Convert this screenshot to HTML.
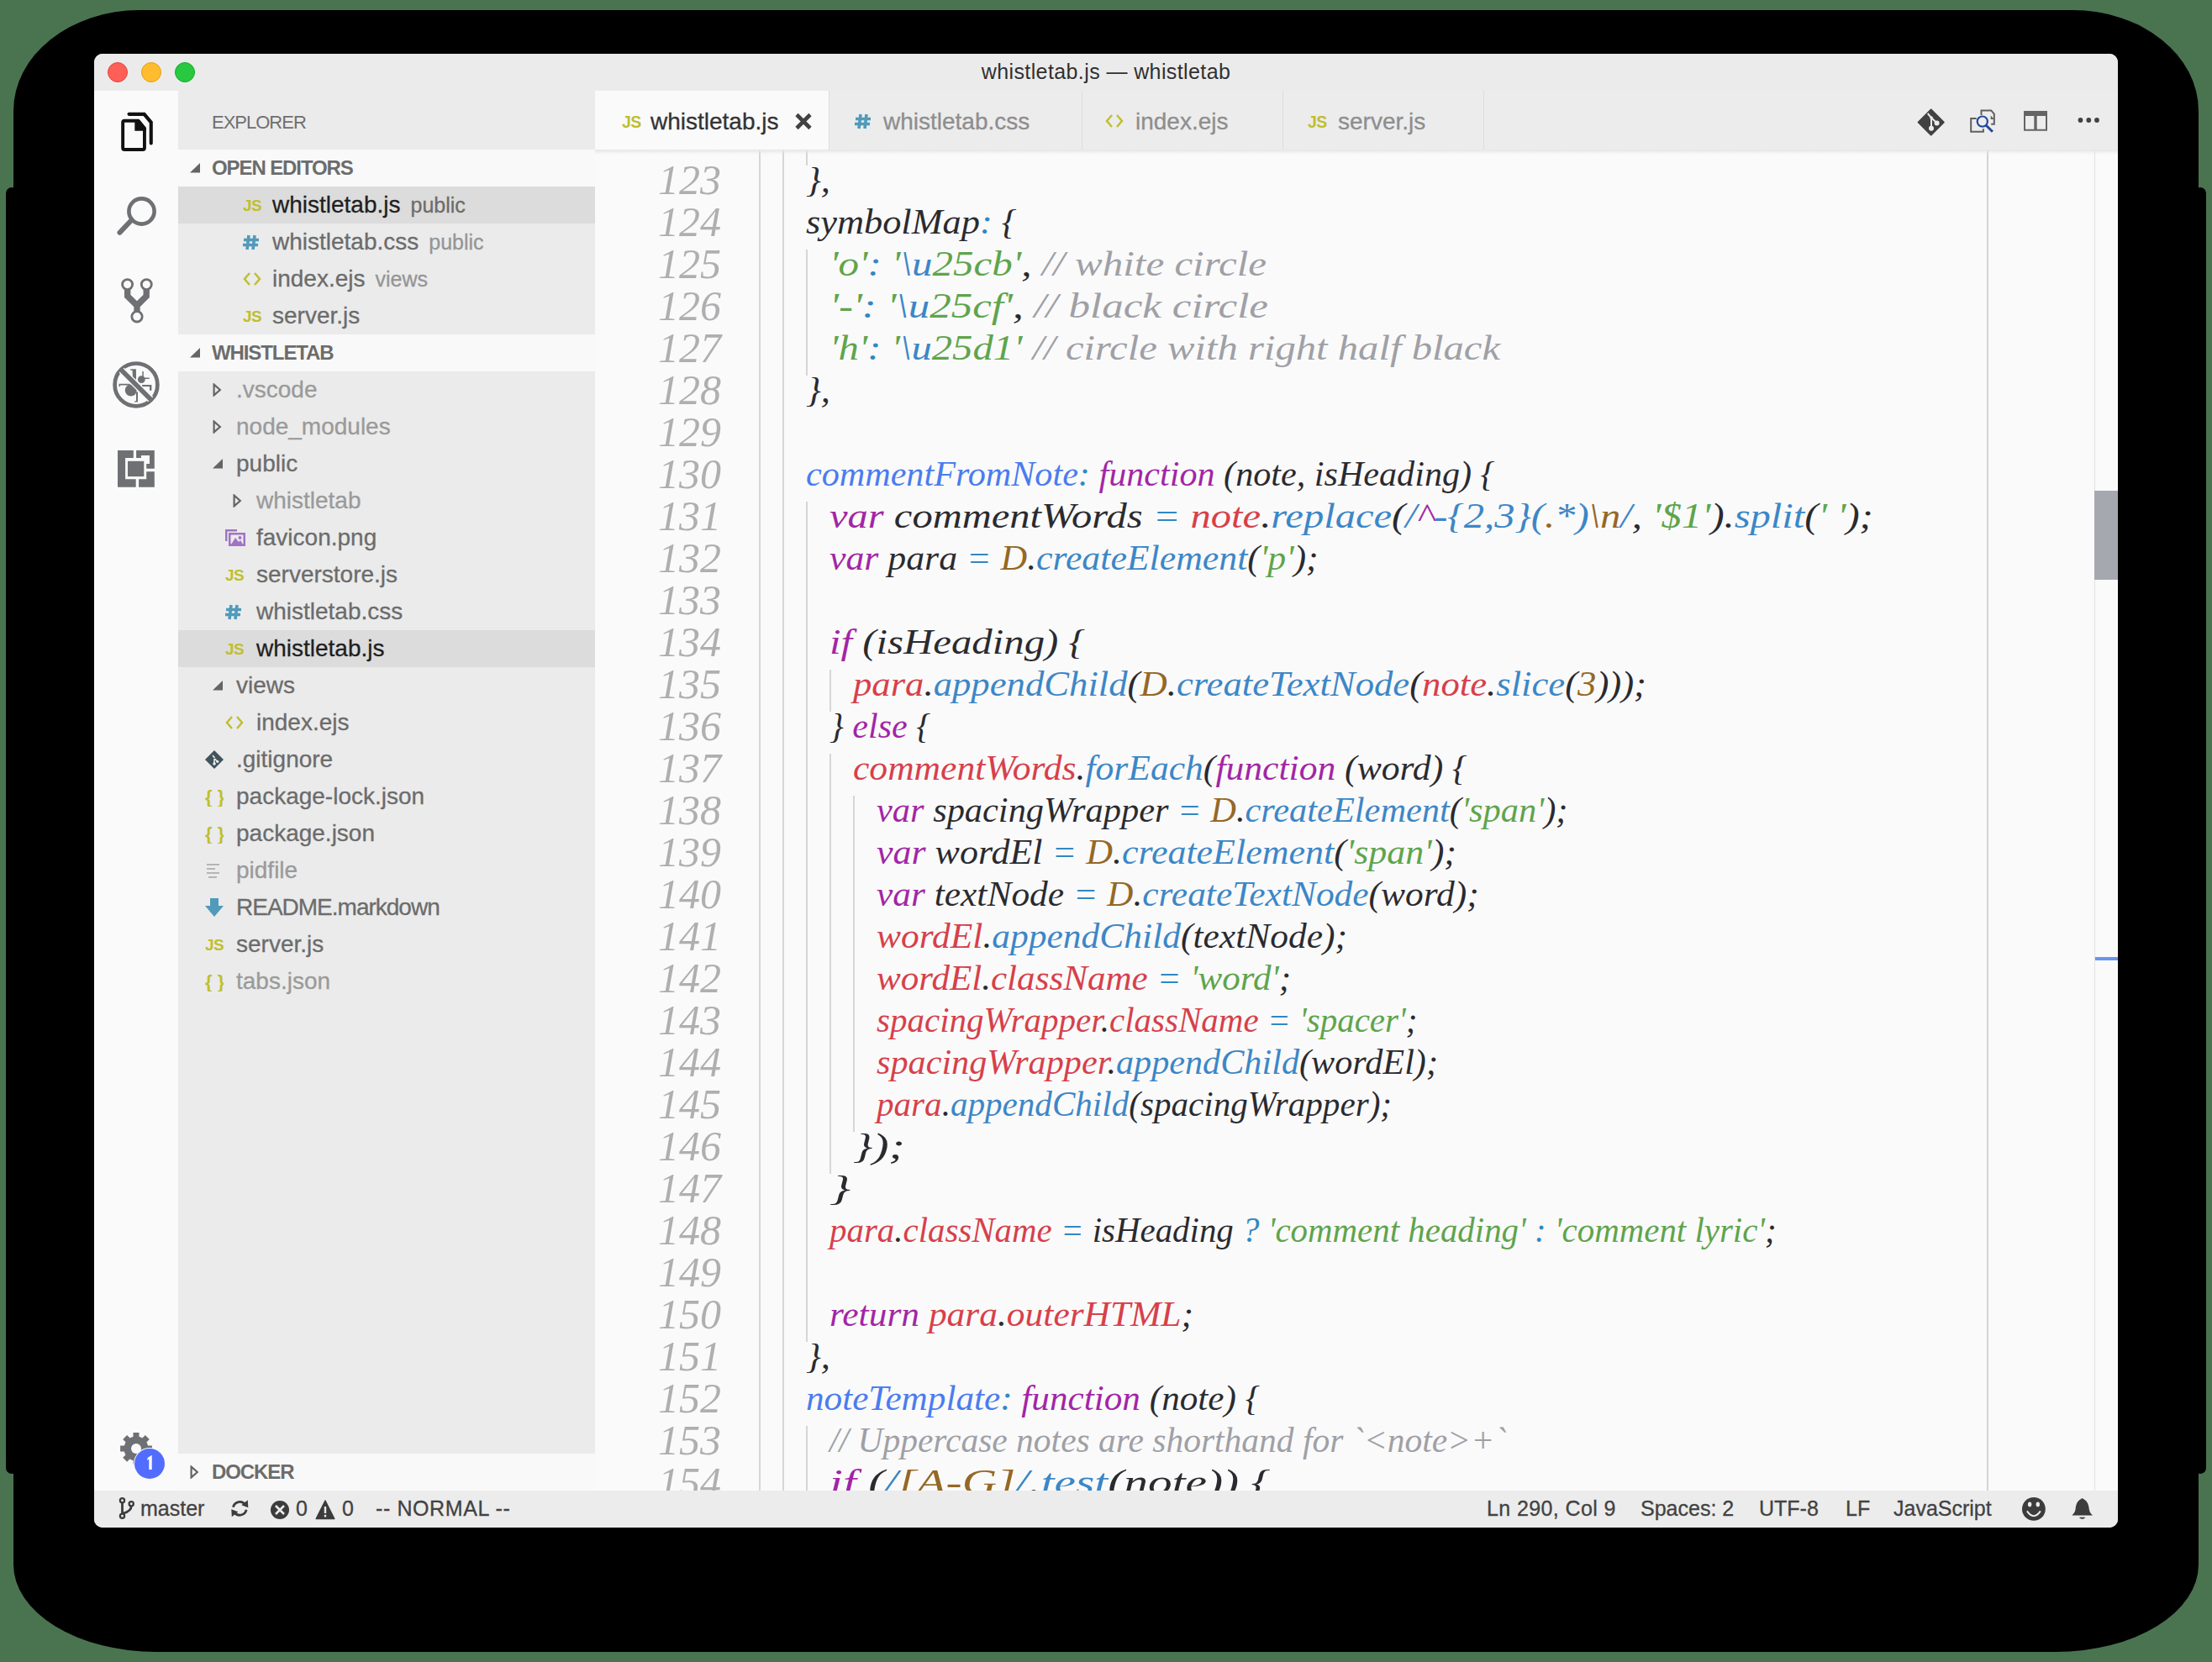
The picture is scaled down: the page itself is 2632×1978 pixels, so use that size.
<!DOCTYPE html>
<html><head><meta charset="utf-8">
<style>
*{margin:0;padding:0;box-sizing:border-box}
html,body{width:2632px;height:1978px;overflow:hidden;background:#4a7450;font-family:"Liberation Sans",sans-serif}
.abs{position:absolute}
#shadow{position:absolute;left:16px;top:12px;width:2600px;height:1954px;background:#000;border-radius:150px 150px 170px 170px / 120px 120px 104px 104px}
#win{position:absolute;left:112px;top:64px;width:2408px;height:1754px;border-radius:10px;overflow:hidden;background:#fafafa}
#title{position:absolute;left:0;top:0;width:2408px;height:44px;background:#ebebeb}
#title .t{position:absolute;left:0;width:2408px;top:-1px;height:44px;line-height:44px;text-align:center;font-size:25px;letter-spacing:0.4px;color:#303030}
.light{position:absolute;top:10px;width:24px;height:24px;border-radius:50%}
#act{position:absolute;left:0;top:44px;width:100px;height:1666px;background:#fafafa}
#side{position:absolute;left:100px;top:44px;width:496px;height:1666px;background:#ebebeb}
#tabs{position:absolute;left:596px;top:44px;width:1812px;height:70px;background:#ececec}
#editor{position:absolute;left:596px;top:114px;width:1812px;height:1596px;background:#fafafa;overflow:hidden}
#status{-webkit-text-stroke:0.3px currentColor;position:absolute;left:0;top:1710px;width:2408px;height:44px;background:#ececec;font-size:25px;color:#424242}
.sh{position:absolute;left:0;width:496px;height:44px;background:#f9f9f9}
.row{-webkit-text-stroke:0.3px currentColor;position:absolute;left:0;width:496px;height:44px;font-size:28px;line-height:44px;color:#6c6c6c;white-space:nowrap}
.row.sel{background:#dcdcdc}
.row .n{position:absolute;top:0}
.row .d{font-size:25px;color:#8e8e8e;margin-left:12px}
.hd{position:absolute;font-size:24px;letter-spacing:-1.1px;font-weight:bold;color:#6c6c6c;line-height:44px;top:0}
.tri{position:absolute;width:0;height:0}
.ic{position:absolute}
.js{font-weight:bold;color:#cbcb41;font-size:19px;letter-spacing:-1px}
.css{font-weight:bold;color:#519aba;font-size:26px}
.ejs{color:#cbcb41;font-size:22px;font-weight:bold}
.json{color:#cbcb41;font-size:24px;font-weight:bold}
.g{position:absolute;width:2px;height:50px;background:#d6d6d6}
.ln{position:absolute;left:0;width:150px;text-align:right;height:50px;line-height:50px;font-family:"Liberation Serif",serif;font-style:italic;font-size:50px;color:#a3a3a5;white-space:nowrap;opacity:0.85}
.cl{position:absolute;height:50px;line-height:50px;font-family:"Liberation Serif",serif;font-style:italic;font-size:42px;white-space:pre;transform-origin:0 0;opacity:0.85}
</style></head><body>
<div id="shadow"></div>
<div class="abs" style="left:7px;top:223px;width:14px;height:1531px;background:#000;border-radius:9px/9px"></div>
<div class="abs" style="left:2611px;top:223px;width:14px;height:1531px;background:#000;border-radius:9px/9px"></div>
<div id="win">
  <div id="title">
    <div class="t">whistletab.js — whistletab</div>
    <div class="light" style="left:16px;background:#fe5f57;border:1px solid #e2463f"></div>
    <div class="light" style="left:56px;background:#febc2e;border:1px solid #e1a116"></div>
    <div class="light" style="left:96px;background:#28c840;border:1px solid #12ac28"></div>
  </div>
  <div id="act"><svg class="abs" style="left:0;top:0" width="100" height="1666" viewBox="0 0 100 1666"><g fill="none" stroke="#111" stroke-width="3.9" stroke-linejoin="round"><path d="M36.15,35.75 H52.5 L59.95,45 V67.95 Q59.95,69.95 57.95,69.95 H36.15 Q34.15,69.95 34.15,67.95 V37.75 Q34.15,35.75 36.15,35.75 Z"/></g><path d="M48.3,34 H53.5 L61.9,44 V47.8 H48.3 Z" fill="#111"/><path d="M41.5,27.85 H59.6 L67.75,37.6 V62.5" fill="none" stroke="#111" stroke-width="4.1" stroke-linecap="round" stroke-linejoin="miter"/><circle cx="56.5" cy="143.5" r="15.1" fill="none" stroke="#6f7073" stroke-width="4.6"/><path d="M43.5,155 L30.5,168.8" stroke="#6f7073" stroke-width="6" stroke-linecap="round"/><g transform="translate(24,216)" fill="none" stroke="#6f7073"><circle cx="15.6" cy="14.6" r="6.0" stroke-width="2.8"/><circle cx="38.3" cy="14.6" r="6.0" stroke-width="2.8"/><circle cx="27" cy="52.8" r="6.2" stroke-width="2.8"/><path d="M15.7,20 V28.5 L27,39.5 V47 M38.2,20 V28.5 L27,39.5" stroke-width="7.4" stroke-linejoin="miter"/></g><g transform="translate(16,316)" fill="#6f7073"><circle cx="34" cy="33.9" r="25.4" fill="none" stroke="#6f7073" stroke-width="4.7"/><defs><clipPath id="cpL"><path d="M0,0 H0 L0,70 H70 Z M0,4 L15,19 L52,56 L66,70 H0 Z"/></clipPath></defs><g clip-path="url(#cpLL)"></g><circle cx="27.8" cy="40.5" r="7"/><circle cx="40.3" cy="27.6" r="4.4"/><path d="M13.5,32.7 H26.5 V34.5 H14.9 V36 H13.5 Z"/><path d="M34,42.5 H36 V54.6 H32 V53.2 H34 Z"/><path d="M27.2,15.3 H33.9 L34,28 L30,26 L29.5,16.8 H27.2 Z"/><path d="M41.3,18 H42.8 V25.6 H49.7 V27 H41.3 Z"/><path d="M41,34 H52.4 V40.7 H50 V36 H41 Z"/></g><g transform="translate(16,316)"><path d="M16.6,16.6 L51.3,51.3" stroke="#fafafa" stroke-width="8.4"/><path d="M16.2,16.2 L51.7,51.7" stroke="#6f7073" stroke-width="5.6"/></g><g transform="translate(28,428)" fill="#6f7073"><path d="M0,0 H18.8 V8.9 H9.1 V34.2 H21.7 V43.8 H0 Z"/><path d="M22.1,0 H43.8 V21.7 H34.2 V15.9 H38 V6 H27.9 V8.9 H22.1 Z"/><path d="M34.2,25.3 H43.8 V43.8 H25.1 V34.2 H34.2 Z"/><path d="M12,12.8 H31.3 V31.1 H12 Z"/></g><path d="M46.48,1602.76 L46.50,1597.02 L53.50,1597.02 L53.52,1602.76 L56.80,1604.12 L60.87,1600.08 L65.82,1605.03 L61.78,1609.10 L63.14,1612.38 L68.88,1612.40 L68.88,1619.40 L63.14,1619.42 L61.78,1622.70 L65.82,1626.77 L60.87,1631.72 L56.80,1627.68 L53.52,1629.04 L53.50,1634.78 L46.50,1634.78 L46.48,1629.04 L43.20,1627.68 L39.13,1631.72 L34.18,1626.77 L38.22,1622.70 L36.86,1619.42 L31.12,1619.40 L31.12,1612.40 L36.86,1612.38 L38.22,1609.10 L34.18,1605.03 L39.13,1600.08 L43.20,1604.12 Z" fill="#6f7073"/><circle cx="50" cy="1615.9" r="14.5" fill="#6f7073"/><circle cx="50" cy="1615.9" r="6" fill="#fafafa"/><circle cx="66" cy="1633.9" r="19" fill="#fafafa"/><circle cx="66" cy="1633.9" r="18" fill="#526cff"/><path d="M63.6,1627 L68.7,1623.8 V1641 H65.3 V1628.6 L63.2,1630 Z" fill="#fff"/></svg></div>
  <div id="side"><div class="abs" style="left:40px;top:26px;font-size:22px;letter-spacing:-1px;color:#6f6f6f;line-height:24px">EXPLORER</div>
<div class="sh" style="top:70px"></div>
<svg class="ic" style="left:14px;top:86px" width="13" height="12" viewBox="0 0 13 12"><path d="M12 0 V11.5 H0 Z" fill="#646465"/></svg>
<div class="hd" style="left:40px;top:70px">OPEN EDITORS</div>
<div class="row sel" style="top:114px"></div>
<svg class="ic" style="left:77px;top:128px" width="22" height="17" viewBox="0 0 22 17"><text x="0" y="15" font-family="Liberation Sans" font-weight="bold" font-size="19" fill="#bfbf30" letter-spacing="-0.5">JS</text></svg>
<div class="row" style="top:114px;left:112px;width:auto;color:#1f1f1f">whistletab.js<span class="d" style="color:#6c6c6c">public</span></div>
<div class="row" style="top:158px"></div>
<svg class="ic" style="left:77px;top:171px" width="20" height="19" viewBox="0 0 20 19"><g stroke="#519aba" stroke-width="3.6" fill="none"><path d="M7 1 L5 18 M14 1 L12 18 M1 6.5 H19 M0 12.5 H18"/></g></svg>
<div class="row" style="top:158px;left:112px;width:auto;color:#6c6c6c">whistletab.css<span class="d" style="color:#959595">public</span></div>
<div class="row" style="top:202px"></div>
<svg class="ic" style="left:77px;top:215px" width="22" height="18" viewBox="0 0 22 18"><g stroke="#bfbf30" stroke-width="2.5" fill="none"><path d="M8 2 L2 9 L8 16 M14 2 L20 9 L14 16"/></g></svg>
<div class="row" style="top:202px;left:112px;width:auto;color:#6c6c6c">index.ejs<span class="d" style="color:#959595">views</span></div>
<div class="row" style="top:246px"></div>
<svg class="ic" style="left:77px;top:260px" width="22" height="17" viewBox="0 0 22 17"><text x="0" y="15" font-family="Liberation Sans" font-weight="bold" font-size="19" fill="#bfbf30" letter-spacing="-0.5">JS</text></svg>
<div class="row" style="top:246px;left:112px;width:auto;color:#6c6c6c">server.js</div>
<div class="sh" style="top:290px"></div>
<svg class="ic" style="left:14px;top:306px" width="13" height="12" viewBox="0 0 13 12"><path d="M12 0 V11.5 H0 Z" fill="#646465"/></svg>
<div class="hd" style="left:40px;top:290px">WHISTLETAB</div>
<svg class="ic" style="left:41px;top:348px" width="12" height="16" viewBox="0 0 12 16"><path d="M1.6 1.6 L8.8 8 L1.6 14.4 Z" fill="none" stroke="#646465" stroke-width="2.2"/></svg>
<div class="row" style="top:334px;left:69px;width:auto;color:#9a9a9a">.vscode</div>
<svg class="ic" style="left:41px;top:392px" width="12" height="16" viewBox="0 0 12 16"><path d="M1.6 1.6 L8.8 8 L1.6 14.4 Z" fill="none" stroke="#646465" stroke-width="2.2"/></svg>
<div class="row" style="top:378px;left:69px;width:auto;color:#9a9a9a">node_modules</div>
<svg class="ic" style="left:41px;top:438px" width="13" height="12" viewBox="0 0 13 12"><path d="M12 0 V11.5 H0 Z" fill="#646465"/></svg>
<div class="row" style="top:422px;left:69px;width:auto;color:#6c6c6c">public</div>
<svg class="ic" style="left:65px;top:480px" width="12" height="16" viewBox="0 0 12 16"><path d="M1.6 1.6 L8.8 8 L1.6 14.4 Z" fill="none" stroke="#646465" stroke-width="2.2"/></svg>
<div class="row" style="top:466px;left:93px;width:auto;color:#9a9a9a">whistletab</div>
<svg class="ic" style="left:56px;top:522px" width="24" height="20" viewBox="0 0 24 20"><g fill="#a074c4"><path d="M0 0 H14 V2.5 H2.5 V14 H0 Z"/><path d="M4 4 H24 V20 H4 Z M6.5 6.5 V17.5 H21.5 V6.5 Z"/><path d="M7 18 L12 10 L16 15 L18 13 L21 18 Z"/><circle cx="17.5" cy="10" r="2"/></g></svg>
<div class="row" style="top:510px;left:93px;width:auto;color:#6c6c6c">favicon.png</div>
<svg class="ic" style="left:56px;top:568px" width="22" height="17" viewBox="0 0 22 17"><text x="0" y="15" font-family="Liberation Sans" font-weight="bold" font-size="19" fill="#bfbf30" letter-spacing="-0.5">JS</text></svg>
<div class="row" style="top:554px;left:93px;width:auto;color:#6c6c6c">serverstore.js</div>
<svg class="ic" style="left:56px;top:611px" width="20" height="19" viewBox="0 0 20 19"><g stroke="#519aba" stroke-width="3.6" fill="none"><path d="M7 1 L5 18 M14 1 L12 18 M1 6.5 H19 M0 12.5 H18"/></g></svg>
<div class="row" style="top:598px;left:93px;width:auto;color:#6c6c6c">whistletab.css</div>
<div class="row sel" style="top:642px"></div>
<svg class="ic" style="left:56px;top:656px" width="22" height="17" viewBox="0 0 22 17"><text x="0" y="15" font-family="Liberation Sans" font-weight="bold" font-size="19" fill="#bfbf30" letter-spacing="-0.5">JS</text></svg>
<div class="row" style="top:642px;left:93px;width:auto;color:#1f1f1f">whistletab.js</div>
<svg class="ic" style="left:41px;top:702px" width="13" height="12" viewBox="0 0 13 12"><path d="M12 0 V11.5 H0 Z" fill="#646465"/></svg>
<div class="row" style="top:686px;left:69px;width:auto;color:#6c6c6c">views</div>
<svg class="ic" style="left:56px;top:743px" width="22" height="18" viewBox="0 0 22 18"><g stroke="#bfbf30" stroke-width="2.5" fill="none"><path d="M8 2 L2 9 L8 16 M14 2 L20 9 L14 16"/></g></svg>
<div class="row" style="top:730px;left:93px;width:auto;color:#6c6c6c">index.ejs</div>
<svg class="ic" style="left:32px;top:785px" width="22" height="22" viewBox="0 0 22 22"><path d="M11 0 L22 11 L11 22 L0 11 Z" fill="#41535b"/><path d="M9 6 L11.5 9 M11 10 V16 M11.5 10 L14.5 13" stroke="#ececec" stroke-width="1.6" fill="none"/><circle cx="11" cy="16" r="1.8" fill="#ececec"/><circle cx="14.8" cy="13.3" r="1.6" fill="#ececec"/></svg>
<div class="row" style="top:774px;left:69px;width:auto;color:#6c6c6c">.gitignore</div>
<svg class="ic" style="left:32px;top:828px" width="22" height="24" viewBox="0 0 22 24"><text x="0" y="20" font-family="Liberation Sans" font-weight="bold" font-size="22" fill="#bfbf30">{ }</text></svg>
<div class="row" style="top:818px;left:69px;width:auto;color:#6c6c6c">package-lock.json</div>
<svg class="ic" style="left:32px;top:872px" width="22" height="24" viewBox="0 0 22 24"><text x="0" y="20" font-family="Liberation Sans" font-weight="bold" font-size="22" fill="#bfbf30">{ }</text></svg>
<div class="row" style="top:862px;left:69px;width:auto;color:#6c6c6c">package.json</div>
<svg class="ic" style="left:32px;top:918px" width="20" height="20" viewBox="0 0 20 20"><g stroke="#b5b5b5" stroke-width="2" fill="none"><path d="M2 3 H17 M2 8 H12 M2 13 H17 M4 18 H14"/></g></svg>
<div class="row" style="top:906px;left:69px;width:auto;color:#9a9a9a">pidfile</div>
<svg class="ic" style="left:32px;top:961px" width="22" height="22" viewBox="0 0 22 22"><path d="M6 0 H16 V9 H22 L11 22 L0 9 H6 Z" fill="#519aba"/></svg>
<div class="row" style="top:950px;left:69px;width:auto;color:#6c6c6c;letter-spacing:-1px">README.markdown</div>
<svg class="ic" style="left:32px;top:1008px" width="22" height="17" viewBox="0 0 22 17"><text x="0" y="15" font-family="Liberation Sans" font-weight="bold" font-size="19" fill="#bfbf30" letter-spacing="-0.5">JS</text></svg>
<div class="row" style="top:994px;left:69px;width:auto;color:#6c6c6c">server.js</div>
<svg class="ic" style="left:32px;top:1048px" width="22" height="24" viewBox="0 0 22 24"><text x="0" y="20" font-family="Liberation Sans" font-weight="bold" font-size="22" fill="#bfbf30">{ }</text></svg>
<div class="row" style="top:1038px;left:69px;width:auto;color:#9a9a9a">tabs.json</div>
<div class="sh" style="top:1622px"></div>
<svg class="ic" style="left:14px;top:1636px" width="12" height="16" viewBox="0 0 12 16"><path d="M1.6 1.6 L8.8 8 L1.6 14.4 Z" fill="none" stroke="#646465" stroke-width="2.2"/></svg>
<div class="hd" style="left:40px;top:1622px">DOCKER</div></div>
  <div id="tabs"><div class="abs" style="left:0;top:0;width:278px;height:70px;background:#fafafa"></div>
<div class="abs" style="left:278px;top:0;width:1px;height:70px;background:#dddddd"></div>
<div class="abs" style="left:579px;top:0;width:1px;height:70px;background:#dddddd"></div>
<div class="abs" style="left:818px;top:0;width:1px;height:70px;background:#dddddd"></div>
<div class="abs" style="left:1057px;top:0;width:1px;height:70px;background:#dddddd"></div>
<svg class="abs" style="left:32px;top:28px" width="24" height="18" viewBox="0 0 24 18"><text x="0" y="16" font-family="Liberation Sans" font-weight="bold" font-size="19.5" fill="#bfbf30" letter-spacing="-0.5">JS</text></svg>
<div class="abs" style="left:66px;font-size:28px;line-height:70px;top:2px;-webkit-text-stroke:0.3px currentColor;white-space:nowrap;color:#333333">whistletab.js</div>
<svg class="abs" style="left:237px;top:26px" width="22" height="21" viewBox="0 0 22 21"><path d="M3,2.5 L19,18.5 M19,2.5 L3,18.5" stroke="#424242" stroke-width="4.6"/></svg>
<svg class="abs" style="left:309px;top:27px" width="20" height="19" viewBox="0 0 20 19"><g stroke="#519aba" stroke-width="3.6" fill="none"><path d="M7 1 L5 18 M14 1 L12 18 M1 6.5 H19 M0 12.5 H18"/></g></svg>
<div class="abs" style="left:343px;font-size:28px;line-height:70px;top:2px;-webkit-text-stroke:0.3px currentColor;white-space:nowrap;color:#8e8e8e">whistletab.css</div>
<svg class="abs" style="left:607px;top:27px" width="22" height="18" viewBox="0 0 22 18"><g stroke="#bfbf30" stroke-width="2.5" fill="none"><path d="M8 2 L2 9 L8 16 M14 2 L20 9 L14 16"/></g></svg>
<div class="abs" style="left:643px;font-size:28px;line-height:70px;top:2px;-webkit-text-stroke:0.3px currentColor;white-space:nowrap;color:#8e8e8e">index.ejs</div>
<svg class="abs" style="left:848px;top:28px" width="24" height="18" viewBox="0 0 24 18"><text x="0" y="16" font-family="Liberation Sans" font-weight="bold" font-size="19.5" fill="#bfbf30" letter-spacing="-0.5">JS</text></svg>
<div class="abs" style="left:884px;font-size:28px;line-height:70px;top:2px;-webkit-text-stroke:0.3px currentColor;white-space:nowrap;color:#8e8e8e">server.js</div>
<svg class="abs" style="left:0;top:0" width="1812" height="70" viewBox="0 0 1812 70"><path d="M1589.6999999999998,22.5 L1604.6999999999998,37.5 L1589.6999999999998,52.5 L1574.6999999999998,37.5 Z" fill="#424242" stroke="#424242" stroke-width="2" stroke-linejoin="round"/><path d="M1585.6999999999998,27.0 L1589.9999999999998,32.0 V44.5 M1589.9999999999998,32.0 L1596.6,38.5" stroke="#ececec" stroke-width="2" fill="none"/><circle cx="1589.9999999999998" cy="44.7" r="3" fill="#ececec"/><circle cx="1596.6" cy="38.5" r="3" fill="#ececec"/><circle cx="1589.9999999999998" cy="32.0" r="1.8" fill="#ececec"/><g transform="translate(1636.1999999999998,22.400000000000006)" fill="none" stroke="#5f5f5f" stroke-width="2"><path d="M13.3,6.5 V1 H25 L28.6,5.2 V17.3 H25"/><path d="M7.5,10.7 H1 V26.3 H15.7 V22.8"/></g><g transform="translate(1636.1999999999998,22.400000000000006)"><path d="M24.5,7 L28.6,11.5 H24.5 Z" fill="#5f5f5f"/><circle cx="14.6" cy="14.2" r="6.1" fill="none" stroke="#23489c" stroke-width="2.2"/><path d="M18.8,18.6 L26.7,26.4" stroke="#23489c" stroke-width="3"/></g><g transform="translate(1700,23.900000000000006)" fill="#646464"><path d="M0,0 H28 V23.8 H0 Z M2,6.1 V21.8 H12.3 V6.1 Z M15.7,6.1 V21.8 H26 V6.1 Z"/></g><circle cx="1767.5" cy="35" r="2.9" fill="#424242"/><circle cx="1777.3000000000002" cy="35" r="2.9" fill="#424242"/><circle cx="1787" cy="35" r="2.9" fill="#424242"/></svg></div>
  <div id="editor"><div class="g" style="left:195px;top:-31px"></div>
<div class="g" style="left:223px;top:-31px"></div>
<div class="g" style="left:251px;top:-31px"></div>
<div class="g" style="left:195px;top:19px"></div>
<div class="g" style="left:223px;top:19px"></div>
<div class="g" style="left:195px;top:69px"></div>
<div class="g" style="left:223px;top:69px"></div>
<div class="g" style="left:195px;top:119px"></div>
<div class="g" style="left:223px;top:119px"></div>
<div class="g" style="left:251px;top:119px"></div>
<div class="g" style="left:195px;top:169px"></div>
<div class="g" style="left:223px;top:169px"></div>
<div class="g" style="left:251px;top:169px"></div>
<div class="g" style="left:195px;top:219px"></div>
<div class="g" style="left:223px;top:219px"></div>
<div class="g" style="left:251px;top:219px"></div>
<div class="g" style="left:195px;top:269px"></div>
<div class="g" style="left:223px;top:269px"></div>
<div class="g" style="left:195px;top:319px"></div>
<div class="g" style="left:223px;top:319px"></div>
<div class="g" style="left:195px;top:369px"></div>
<div class="g" style="left:223px;top:369px"></div>
<div class="g" style="left:195px;top:419px"></div>
<div class="g" style="left:223px;top:419px"></div>
<div class="g" style="left:251px;top:419px"></div>
<div class="g" style="left:195px;top:469px"></div>
<div class="g" style="left:223px;top:469px"></div>
<div class="g" style="left:251px;top:469px"></div>
<div class="g" style="left:195px;top:519px"></div>
<div class="g" style="left:223px;top:519px"></div>
<div class="g" style="left:251px;top:519px"></div>
<div class="g" style="left:195px;top:569px"></div>
<div class="g" style="left:223px;top:569px"></div>
<div class="g" style="left:251px;top:569px"></div>
<div class="g" style="left:195px;top:619px"></div>
<div class="g" style="left:223px;top:619px"></div>
<div class="g" style="left:251px;top:619px"></div>
<div class="g" style="left:279px;top:619px"></div>
<div class="g" style="left:195px;top:669px"></div>
<div class="g" style="left:223px;top:669px"></div>
<div class="g" style="left:251px;top:669px"></div>
<div class="g" style="left:195px;top:719px"></div>
<div class="g" style="left:223px;top:719px"></div>
<div class="g" style="left:251px;top:719px"></div>
<div class="g" style="left:279px;top:719px"></div>
<div class="g" style="left:195px;top:769px"></div>
<div class="g" style="left:223px;top:769px"></div>
<div class="g" style="left:251px;top:769px"></div>
<div class="g" style="left:279px;top:769px"></div>
<div class="g" style="left:307px;top:769px"></div>
<div class="g" style="left:195px;top:819px"></div>
<div class="g" style="left:223px;top:819px"></div>
<div class="g" style="left:251px;top:819px"></div>
<div class="g" style="left:279px;top:819px"></div>
<div class="g" style="left:307px;top:819px"></div>
<div class="g" style="left:195px;top:869px"></div>
<div class="g" style="left:223px;top:869px"></div>
<div class="g" style="left:251px;top:869px"></div>
<div class="g" style="left:279px;top:869px"></div>
<div class="g" style="left:307px;top:869px"></div>
<div class="g" style="left:195px;top:919px"></div>
<div class="g" style="left:223px;top:919px"></div>
<div class="g" style="left:251px;top:919px"></div>
<div class="g" style="left:279px;top:919px"></div>
<div class="g" style="left:307px;top:919px"></div>
<div class="g" style="left:195px;top:969px"></div>
<div class="g" style="left:223px;top:969px"></div>
<div class="g" style="left:251px;top:969px"></div>
<div class="g" style="left:279px;top:969px"></div>
<div class="g" style="left:307px;top:969px"></div>
<div class="g" style="left:195px;top:1019px"></div>
<div class="g" style="left:223px;top:1019px"></div>
<div class="g" style="left:251px;top:1019px"></div>
<div class="g" style="left:279px;top:1019px"></div>
<div class="g" style="left:307px;top:1019px"></div>
<div class="g" style="left:195px;top:1069px"></div>
<div class="g" style="left:223px;top:1069px"></div>
<div class="g" style="left:251px;top:1069px"></div>
<div class="g" style="left:279px;top:1069px"></div>
<div class="g" style="left:307px;top:1069px"></div>
<div class="g" style="left:195px;top:1119px"></div>
<div class="g" style="left:223px;top:1119px"></div>
<div class="g" style="left:251px;top:1119px"></div>
<div class="g" style="left:279px;top:1119px"></div>
<div class="g" style="left:307px;top:1119px"></div>
<div class="g" style="left:195px;top:1169px"></div>
<div class="g" style="left:223px;top:1169px"></div>
<div class="g" style="left:251px;top:1169px"></div>
<div class="g" style="left:279px;top:1169px"></div>
<div class="g" style="left:195px;top:1219px"></div>
<div class="g" style="left:223px;top:1219px"></div>
<div class="g" style="left:251px;top:1219px"></div>
<div class="g" style="left:195px;top:1269px"></div>
<div class="g" style="left:223px;top:1269px"></div>
<div class="g" style="left:251px;top:1269px"></div>
<div class="g" style="left:195px;top:1319px"></div>
<div class="g" style="left:223px;top:1319px"></div>
<div class="g" style="left:251px;top:1319px"></div>
<div class="g" style="left:195px;top:1369px"></div>
<div class="g" style="left:223px;top:1369px"></div>
<div class="g" style="left:251px;top:1369px"></div>
<div class="g" style="left:195px;top:1419px"></div>
<div class="g" style="left:223px;top:1419px"></div>
<div class="g" style="left:195px;top:1469px"></div>
<div class="g" style="left:223px;top:1469px"></div>
<div class="g" style="left:195px;top:1519px"></div>
<div class="g" style="left:223px;top:1519px"></div>
<div class="g" style="left:251px;top:1519px"></div>
<div class="g" style="left:195px;top:1569px"></div>
<div class="g" style="left:223px;top:1569px"></div>
<div class="g" style="left:251px;top:1569px"></div>
<div class="ln" style="top:11px">123</div>
<div class="ln" style="top:61px">124</div>
<div class="ln" style="top:111px">125</div>
<div class="ln" style="top:161px">126</div>
<div class="ln" style="top:211px">127</div>
<div class="ln" style="top:261px">128</div>
<div class="ln" style="top:311px">129</div>
<div class="ln" style="top:361px">130</div>
<div class="ln" style="top:411px">131</div>
<div class="ln" style="top:461px">132</div>
<div class="ln" style="top:511px">133</div>
<div class="ln" style="top:561px">134</div>
<div class="ln" style="top:611px">135</div>
<div class="ln" style="top:661px">136</div>
<div class="ln" style="top:711px">137</div>
<div class="ln" style="top:761px">138</div>
<div class="ln" style="top:811px">139</div>
<div class="ln" style="top:861px">140</div>
<div class="ln" style="top:911px">141</div>
<div class="ln" style="top:961px">142</div>
<div class="ln" style="top:1011px">143</div>
<div class="ln" style="top:1061px">144</div>
<div class="ln" style="top:1111px">145</div>
<div class="ln" style="top:1161px">146</div>
<div class="ln" style="top:1211px">147</div>
<div class="ln" style="top:1261px">148</div>
<div class="ln" style="top:1311px">149</div>
<div class="ln" style="top:1361px">150</div>
<div class="ln" style="top:1411px">151</div>
<div class="ln" style="top:1461px">152</div>
<div class="ln" style="top:1511px">153</div>
<div class="ln" style="top:1561px">154</div>
<div class="cl" id="L123" style="left:251px;top:11px;transform:scaleX(1.0624)"><span style="color:#06060c">},</span></div>
<div class="cl" id="L124" style="left:251px;top:61px;transform:scaleX(1.0561)"><span style="color:#06060c">symbolMap</span><span style="color:#0f73b9">:</span><span style="color:#06060c"> {</span></div>
<div class="cl" id="L125" style="left:279px;top:111px;transform:scaleX(1.1656)"><span style="color:#44962e">&#x27;o&#x27;</span><span style="color:#0f73b9">:</span><span style="color:#44962e"> &#x27;</span><span style="color:#1a73bf">\u</span><span style="color:#44962e">25cb&#x27;</span><span style="color:#06060c">,</span><span style="color:#909198"> // white circle</span></div>
<div class="cl" id="L126" style="left:279px;top:161px;transform:scaleX(1.2147)"><span style="color:#44962e">&#x27;-&#x27;</span><span style="color:#0f73b9">:</span><span style="color:#44962e"> &#x27;</span><span style="color:#1a73bf">\u</span><span style="color:#44962e">25cf&#x27;</span><span style="color:#06060c">,</span><span style="color:#909198"> // black circle</span></div>
<div class="cl" id="L127" style="left:279px;top:211px;transform:scaleX(1.1585)"><span style="color:#44962e">&#x27;h&#x27;</span><span style="color:#0f73b9">:</span><span style="color:#44962e"> &#x27;</span><span style="color:#1a73bf">\u</span><span style="color:#44962e">25d1&#x27;</span><span style="color:#909198"> // circle with right half black</span></div>
<div class="cl" id="L128" style="left:251px;top:261px;transform:scaleX(1.0624)"><span style="color:#06060c">},</span></div>
<div class="cl" id="L130" style="left:251px;top:361px;transform:scaleX(1.0035)"><span style="color:#2c67ee">commentFromNote</span><span style="color:#0f73b9">:</span><span style="color:#930098"> function</span><span style="color:#06060c"> (note, isHeading) {</span></div>
<div class="cl" id="L131" style="left:279px;top:411px;transform:scaleX(1.1556)"><span style="color:#930098">var</span><span style="color:#06060c"> commentWords </span><span style="color:#0f73b9">=</span><span style="color:#d1202c"> note</span><span style="color:#06060c">.</span><span style="color:#1a73bf">replace</span><span style="color:#06060c">(</span><span style="color:#1a73bf">/</span><span style="color:#930098">^</span><span style="color:#1a73bf">-{2,3}(</span><span style="color:#844f00">.</span><span style="color:#1a73bf">*)</span><span style="color:#844f00">\n</span><span style="color:#1a73bf">/</span><span style="color:#06060c">, </span><span style="color:#44962e">&#x27;$1&#x27;</span><span style="color:#06060c">).</span><span style="color:#1a73bf">split</span><span style="color:#06060c">(</span><span style="color:#44962e">&#x27; &#x27;</span><span style="color:#06060c">);</span></div>
<div class="cl" id="L132" style="left:279px;top:461px;transform:scaleX(1.0425)"><span style="color:#930098">var</span><span style="color:#06060c"> para </span><span style="color:#0f73b9">=</span><span style="color:#844f00"> D</span><span style="color:#06060c">.</span><span style="color:#1a73bf">createElement</span><span style="color:#06060c">(</span><span style="color:#44962e">&#x27;p&#x27;</span><span style="color:#06060c">);</span></div>
<div class="cl" id="L134" style="left:279px;top:561px;transform:scaleX(1.1613)"><span style="color:#930098">if</span><span style="color:#06060c"> (isHeading) {</span></div>
<div class="cl" id="L135" style="left:307px;top:611px;transform:scaleX(1.0643)"><span style="color:#d1202c">para</span><span style="color:#06060c">.</span><span style="color:#1a73bf">appendChild</span><span style="color:#06060c">(</span><span style="color:#844f00">D</span><span style="color:#06060c">.</span><span style="color:#1a73bf">createTextNode</span><span style="color:#06060c">(</span><span style="color:#d1202c">note</span><span style="color:#06060c">.</span><span style="color:#1a73bf">slice</span><span style="color:#06060c">(</span><span style="color:#844f00">3</span><span style="color:#06060c">)));</span></div>
<div class="cl" id="L136" style="left:279px;top:661px;transform:scaleX(1.0009)"><span style="color:#06060c">} </span><span style="color:#930098">else</span><span style="color:#06060c"> {</span></div>
<div class="cl" id="L137" style="left:307px;top:711px;transform:scaleX(1.0377)"><span style="color:#d1202c">commentWords</span><span style="color:#06060c">.</span><span style="color:#1a73bf">forEach</span><span style="color:#06060c">(</span><span style="color:#930098">function</span><span style="color:#06060c"> (word) {</span></div>
<div class="cl" id="L138" style="left:335px;top:761px;transform:scaleX(1.0096)"><span style="color:#930098">var</span><span style="color:#06060c"> spacingWrapper </span><span style="color:#0f73b9">=</span><span style="color:#844f00"> D</span><span style="color:#06060c">.</span><span style="color:#1a73bf">createElement</span><span style="color:#06060c">(</span><span style="color:#44962e">&#x27;span&#x27;</span><span style="color:#06060c">);</span></div>
<div class="cl" id="L139" style="left:335px;top:811px;transform:scaleX(1.0469)"><span style="color:#930098">var</span><span style="color:#06060c"> wordEl </span><span style="color:#0f73b9">=</span><span style="color:#844f00"> D</span><span style="color:#06060c">.</span><span style="color:#1a73bf">createElement</span><span style="color:#06060c">(</span><span style="color:#44962e">&#x27;span&#x27;</span><span style="color:#06060c">);</span></div>
<div class="cl" id="L140" style="left:335px;top:861px;transform:scaleX(1.0338)"><span style="color:#930098">var</span><span style="color:#06060c"> textNode </span><span style="color:#0f73b9">=</span><span style="color:#844f00"> D</span><span style="color:#06060c">.</span><span style="color:#1a73bf">createTextNode</span><span style="color:#06060c">(word);</span></div>
<div class="cl" id="L141" style="left:335px;top:911px;transform:scaleX(1.0354)"><span style="color:#d1202c">wordEl</span><span style="color:#06060c">.</span><span style="color:#1a73bf">appendChild</span><span style="color:#06060c">(textNode);</span></div>
<div class="cl" id="L142" style="left:335px;top:961px;transform:scaleX(1.0255)"><span style="color:#d1202c">wordEl</span><span style="color:#06060c">.</span><span style="color:#d1202c">className</span><span style="color:#0f73b9"> = </span><span style="color:#44962e">&#x27;word&#x27;</span><span style="color:#06060c">;</span></div>
<div class="cl" id="L143" style="left:335px;top:1011px;transform:scaleX(0.9768)"><span style="color:#d1202c">spacingWrapper</span><span style="color:#06060c">.</span><span style="color:#d1202c">className</span><span style="color:#0f73b9"> = </span><span style="color:#44962e">&#x27;spacer&#x27;</span><span style="color:#06060c">;</span></div>
<div class="cl" id="L144" style="left:335px;top:1061px;transform:scaleX(1.0051)"><span style="color:#d1202c">spacingWrapper</span><span style="color:#06060c">.</span><span style="color:#1a73bf">appendChild</span><span style="color:#06060c">(wordEl);</span></div>
<div class="cl" id="L145" style="left:335px;top:1111px;transform:scaleX(0.9785)"><span style="color:#d1202c">para</span><span style="color:#06060c">.</span><span style="color:#1a73bf">appendChild</span><span style="color:#06060c">(spacingWrapper);</span></div>
<div class="cl" id="L146" style="left:307px;top:1161px;transform:scaleX(1.3845)"><span style="color:#06060c">});</span></div>
<div class="cl" id="L147" style="left:279px;top:1211px;transform:scaleX(1.4884)"><span style="color:#06060c">}</span></div>
<div class="cl" id="L148" style="left:279px;top:1261px;transform:scaleX(0.9736)"><span style="color:#d1202c">para</span><span style="color:#06060c">.</span><span style="color:#d1202c">className</span><span style="color:#0f73b9"> = </span><span style="color:#06060c">isHeading </span><span style="color:#0f73b9">? </span><span style="color:#44962e">&#x27;comment heading&#x27; </span><span style="color:#0f73b9">: </span><span style="color:#44962e">&#x27;comment lyric&#x27;</span><span style="color:#06060c">;</span></div>
<div class="cl" id="L150" style="left:279px;top:1361px;transform:scaleX(1.0346)"><span style="color:#930098">return</span><span style="color:#d1202c"> para</span><span style="color:#06060c">.</span><span style="color:#d1202c">outerHTML</span><span style="color:#06060c">;</span></div>
<div class="cl" id="L151" style="left:251px;top:1411px;transform:scaleX(1.0624)"><span style="color:#06060c">},</span></div>
<div class="cl" id="L152" style="left:251px;top:1461px;transform:scaleX(1.0285)"><span style="color:#2c67ee">noteTemplate</span><span style="color:#0f73b9">:</span><span style="color:#930098"> function</span><span style="color:#06060c"> (note) {</span></div>
<div class="cl" id="L153" style="left:279px;top:1511px;transform:scaleX(0.9883)"><span style="color:#909198">// Uppercase notes are shorthand for `&lt;note&gt;+`</span></div>
<div class="cl" id="L154" style="left:279px;top:1561px;transform:scaleX(1.3649)"><span style="color:#930098">if</span><span style="color:#06060c"> (</span><span style="color:#1a73bf">/</span><span style="color:#844f00">[A-G]</span><span style="color:#1a73bf">/</span><span style="color:#06060c">.</span><span style="color:#1a73bf">test</span><span style="color:#06060c">(note)) {</span></div>
<div class="abs" style="left:1656px;top:0;width:2px;height:1596px;background:#d4d4d4"></div>
<div class="abs" style="left:1784px;top:0;width:1px;height:1596px;background:#e2e2e2"></div>
<div class="abs" style="left:1784px;top:406px;width:28px;height:106px;background:#a6a8b0"></div>
<div class="abs" style="left:1785px;top:961px;width:27px;height:4px;background:#6b93ef"></div>
<div class="abs" style="left:0;top:0;width:1812px;height:6px;background:linear-gradient(#e6e6e6,rgba(250,250,250,0))"></div></div>
  <div id="status"><div class="abs" style="left:55px;top:0;height:44px;line-height:42px;white-space:nowrap;">master</div>
<div class="abs" style="left:240px;top:0;height:44px;line-height:42px;white-space:nowrap;">0</div>
<div class="abs" style="left:295px;top:0;height:44px;line-height:42px;white-space:nowrap;">0</div>
<div class="abs" style="left:335px;top:0;height:44px;line-height:42px;white-space:nowrap;letter-spacing:0.6px">-- NORMAL --</div>
<div class="abs" style="left:1657px;top:0;height:44px;line-height:42px;white-space:nowrap;letter-spacing:0.4px">Ln 290, Col 9</div>
<div class="abs" style="left:1840px;top:0;height:44px;line-height:42px;white-space:nowrap;">Spaces: 2</div>
<div class="abs" style="left:1981px;top:0;height:44px;line-height:42px;white-space:nowrap;">UTF-8</div>
<div class="abs" style="left:2084px;top:0;height:44px;line-height:42px;white-space:nowrap;">LF</div>
<div class="abs" style="left:2141px;top:0;height:44px;line-height:42px;white-space:nowrap;">JavaScript</div>
<svg class="abs" style="left:0;top:0" width="2408" height="44" viewBox="0 0 2408 44"><g fill="none" stroke="#3c3c3c" stroke-width="2.3"><circle cx="33.5" cy="11.8" r="2.6"/><circle cx="33.5" cy="30.2" r="2.6"/><circle cx="44.2" cy="15.8" r="2.6"/><path d="M33.5,14.4 V27.599999999999998" stroke-width="2.8"/><path d="M44.2,18.400000000000002 Q44.2,24.2 34.5,27.2" stroke-width="2.8"/></g><g transform="translate(173.3,21.3)" fill="none" stroke="#3c3c3c" stroke-width="2.8"><path d="M-7.8,-1.5 A8,8 0 0 1 6.5,-4.6"/><path d="M7.8,1.5 A8,8 0 0 1 -6.5,4.6"/></g><g transform="translate(173.3,21.3)" fill="#3c3c3c"><path d="M9.5,-10 L10,-1 L2,-4 Z"/><path d="M-9.5,10 L-10,1 L-2,4 Z"/></g><circle cx="221" cy="23" r="11" fill="#3c3c3c"/><path d="M216,18 L226,28 M226,18 L216,28" stroke="#ececec" stroke-width="2.6"/><path d="M275.0,12 L285.8,33.5 H264.2 Z" fill="#3c3c3c" stroke="#3c3c3c" stroke-width="1.5" stroke-linejoin="round"/><path d="M275.0,19 V27" stroke="#ececec" stroke-width="2.4"/><rect x="273.8" y="28.8" width="2.4" height="2.6" fill="#ececec"/><circle cx="2307.9" cy="21.9" r="13.9" fill="#3c3c3c"/><ellipse cx="2303.1" cy="16.4" rx="2.2" ry="2.8" fill="#ececec"/><ellipse cx="2312.8" cy="16.4" rx="2.2" ry="2.8" fill="#ececec"/><path d="M2299.9,24.4 Q2307.9,35.9 2315.9,24.4" fill="none" stroke="#ececec" stroke-width="2"/><g transform="translate(2353.3,9)" fill="#3c3c3c"><path d="M12.3,0 C7,3 5,6 4.3,13 C3.8,17 2,18.5 0,20.5 H24.7 C22.7,18.5 21,17 20.5,13 C19.8,6 17.6,3 12.3,0 Z"/><path d="M8.8,22.8 H15.8 C15,25.5 10,25.5 8.8,22.8 Z"/></g></svg></div>
</div>
</body></html>
